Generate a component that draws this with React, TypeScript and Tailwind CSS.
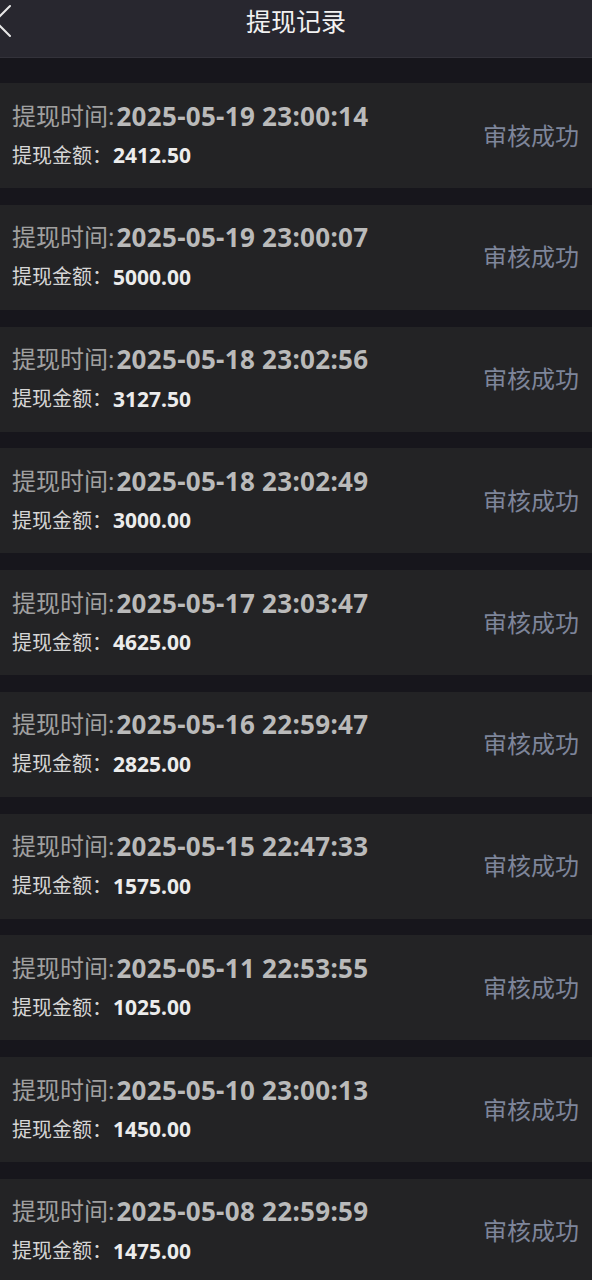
import React from "react";

const records = [
  { time: "2025-05-19 23:00:14", amount: "2412.50" },
  { time: "2025-05-19 23:00:07", amount: "5000.00" },
  { time: "2025-05-18 23:02:56", amount: "3127.50" },
  { time: "2025-05-18 23:02:49", amount: "3000.00" },
  { time: "2025-05-17 23:03:47", amount: "4625.00" },
  { time: "2025-05-16 22:59:47", amount: "2825.00" },
  { time: "2025-05-15 22:47:33", amount: "1575.00" },
  { time: "2025-05-11 22:53:55", amount: "1025.00" },
  { time: "2025-05-10 23:00:13", amount: "1450.00" },
  { time: "2025-05-08 22:59:59", amount: "1475.00" },
];

const font = {
  fontFamily: '"Noto Sans", "Noto Sans CJK SC", sans-serif',
};

const App: React.FC = () => {
  return (
    <div className="min-h-[1280px] w-[592px] overflow-hidden bg-[#17161c]" style={font}>
      {/* Header */}
      <header className="relative flex h-[58px] items-center justify-center border-b border-[#33323a] bg-[#28272f]">
        <svg
          className="absolute left-[-8px] top-[4px]"
          width="22"
          height="34"
          viewBox="0 0 22 34"
          fill="none"
          stroke="#e8e8e8"
          strokeWidth="2"
          strokeLinecap="round"
        >
          <path d="M18 2 L3 17 L18 32" />
        </svg>
        <h1 className="-mt-[14px] text-[25px] font-normal text-[#f2f2f2]">提现记录</h1>
      </header>

      {/* Records */}
      <div className="flex flex-col gap-[16.75px] pt-[25px]">
        {records.map((r) => (
          <div
            key={r.time}
            className="flex h-[105px] items-center justify-between bg-[#232325] pl-3 pr-[13px]"
          >
            <div className="flex flex-col gap-[12px]">
              <div className="flex h-[28px] items-center leading-none">
                <span className="text-[24px] text-[#a0a0a0]">提现时间:</span>
                <span className="ml-[2px] text-[26px] font-bold tracking-[0.3px] text-[#bababa]">{r.time}</span>
              </div>
              <div className="flex h-[28px] items-center leading-none">
                <span className="text-[20px] text-[#d6d6d6]">提现金额：</span>
                <span className="ml-[1px] text-[21px] font-bold text-[#ececec]">{r.amount}</span>
              </div>
            </div>
            <span className="text-[24px] text-[#7e859a]">审核成功</span>
          </div>
        ))}
      </div>
    </div>
  );
};

export default App;
